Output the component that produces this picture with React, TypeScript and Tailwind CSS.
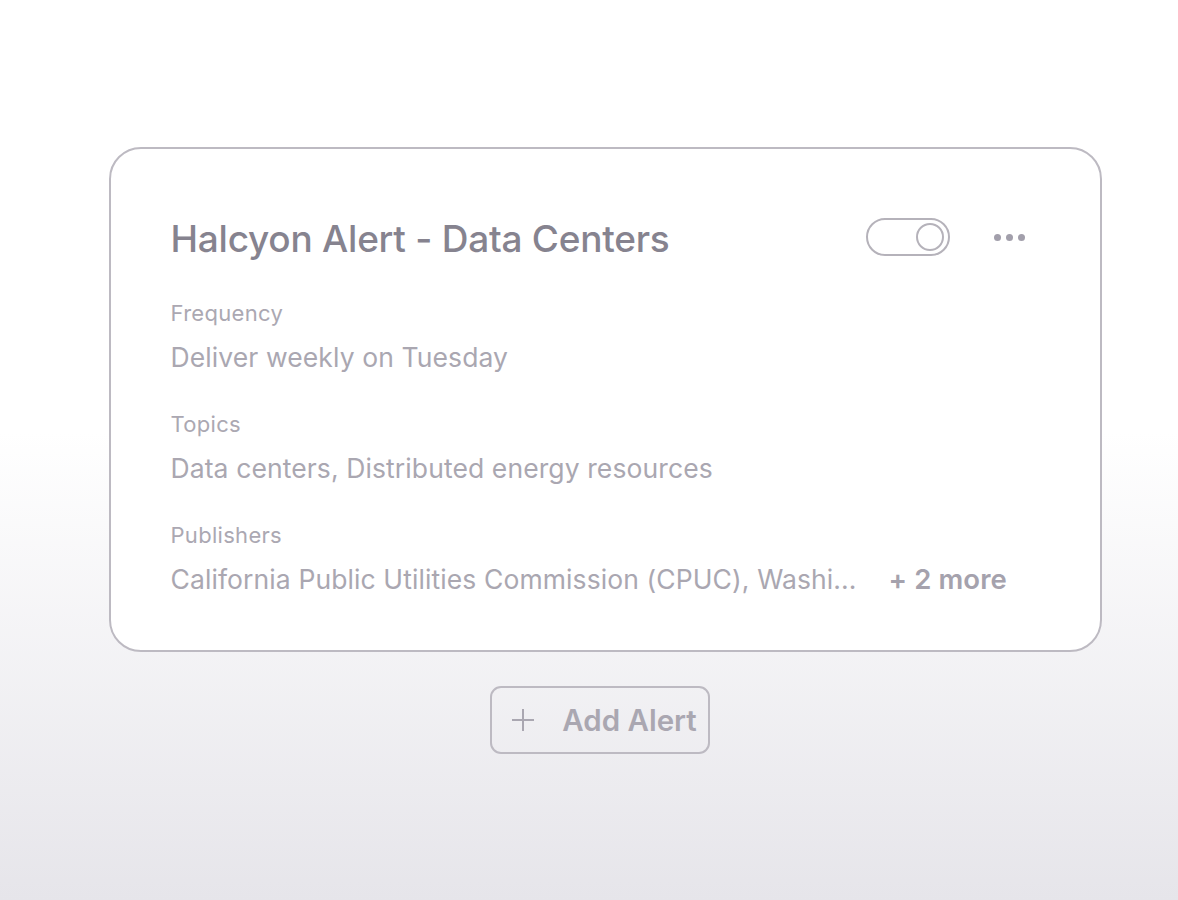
const FONT = { fontFamily: "Inter, 'Noto Sans', sans-serif" };

function Field({ label, children }: { label: string; children: React.ReactNode }) {
  return (
    <div className="flex flex-col">
      <div className="text-[22px] leading-[28px] tracking-[0.3px] text-[#aba8b2]">{label}</div>
      <div className="mt-[14px] text-[26.5px] leading-[32px] tracking-[0.1px] text-[#aaa7b1] whitespace-nowrap">{children}</div>
    </div>
  );
}

export default function App() {
  return (
    <div
      style={FONT}
      className="min-h-[900px] w-full bg-[linear-gradient(to_bottom,#ffffff_0%,#ffffff_48%,#e6e5ea_100%)] flex flex-col items-center pt-[147px] pl-[20px]"
    >
      <div className="ml-[12px] w-[993px] h-[505px] rounded-[32px] border-2 border-[#bdbac2] bg-white pl-[60px] pr-[75px] pt-[68px]">
        <div className="flex items-center justify-between">
          <h1 className="text-[37px] leading-[44px] font-medium text-[#86838f] tracking-[-0.25px]">
            Halcyon Alert - Data Centers
          </h1>
          <div className="-mt-[4px] flex items-center gap-[44px]">
            <button
              type="button"
              className="relative w-[84px] h-[38px] rounded-full border-2 border-[#b5b2ba] bg-white"
            >
              <span className="absolute right-[4px] top-[3px] w-[28px] h-[28px] rounded-full border-2 border-[#b5b2ba] bg-white" />
            </button>
            <div className="flex items-center gap-[5px]">
              <span className="w-[7px] h-[7px] rounded-full bg-[#a29fab]" />
              <span className="w-[7px] h-[7px] rounded-full bg-[#a29fab]" />
              <span className="w-[7px] h-[7px] rounded-full bg-[#a29fab]" />
            </div>
          </div>
        </div>

        <div className="mt-[38px] flex flex-col gap-[37px]">
          <Field label="Frequency">Deliver weekly on Tuesday</Field>
          <Field label="Topics">Data centers, Distributed energy resources</Field>
          <Field label="Publishers">
            <span className="flex items-center">
              <span>California Public Utilities Commission (CPUC), Washi...</span>
              <span className="ml-[32px] text-[27.5px] font-semibold text-[#a5a2ad]">+ 2 more</span>
            </span>
          </Field>
        </div>
      </div>

      <button
        type="button"
        className="mt-[34px] flex items-center gap-[27px] h-[68px] pl-[19px] pr-[11px] rounded-[11px] border-2 border-[#bdbac2] text-[#aaa7b1] translate-x-[1px]"
      >
        <svg viewBox="0 0 24 24" className="w-[24px] h-[24px]" fill="none" stroke="currentColor" strokeWidth={2} strokeLinecap="butt">
          <path d="M12 1v22M1 12h22" />
        </svg>
        <span className="text-[29.5px] font-semibold">Add Alert</span>
      </button>
    </div>
  );
}
